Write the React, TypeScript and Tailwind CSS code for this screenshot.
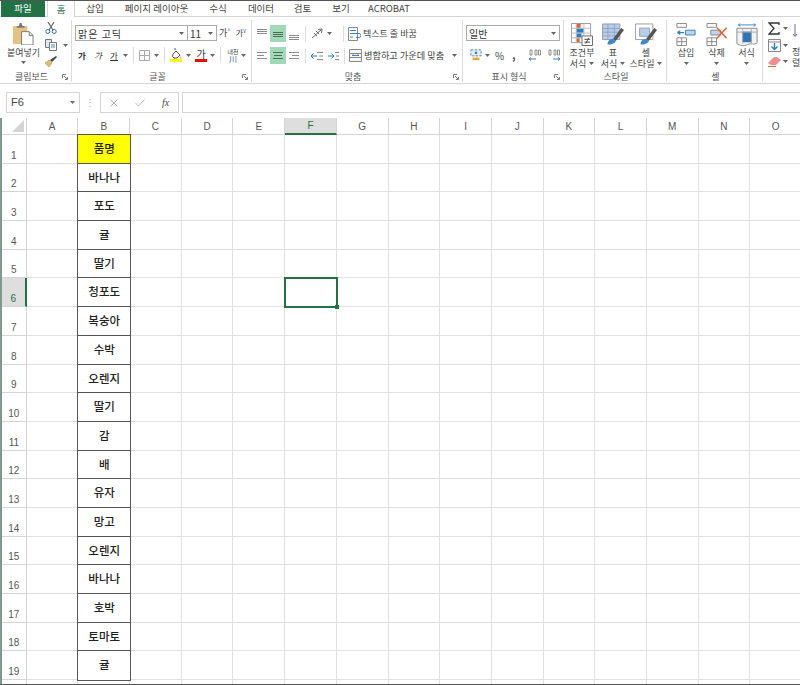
import type { ReactNode } from "react"

const columns = ["A", "B", "C", "D", "E", "F", "G", "H", "I", "J", "K", "L", "M", "N", "O"]

// Column B contents, row by row
const fruits = ["품명", "바나나", "포도", "귤", "딸기", "청포도", "복숭아", "수박", "오렌지", "딸기", "감", "배", "유자", "망고", "오렌지", "바나나", "호박", "토마토", "귤"]

const tabs = [
  { label: "삽입", width: "w-[40px]" },
  { label: "페이지 레이아웃", width: "w-[83px]" },
  { label: "수식", width: "w-[40px]" },
  { label: "데이터", width: "w-[46px]" },
  { label: "검토", width: "w-[37px]" },
  { label: "보기", width: "w-[40px]" },
  { label: "ACROBAT", width: "w-[56px]" },
]

function Caret() {
  return (
    <svg className="h-[3px] w-[5px] shrink-0" viewBox="0 0 5 3">
      <path d="M0 0h5L2.5 3z" fill="#666" />
    </svg>
  )
}

function Launcher() {
  return (
    <svg className="h-[6px] w-[6px] justify-self-end" viewBox="0 0 6 6">
      <path d="M.5 4V.5H4M2 2l3 3M5.500 3v2.500H3" fill="none" stroke="#777" strokeWidth="1" />
    </svg>
  )
}

function Group({ width, label, launcher, children }: { width: string; label: string; launcher?: boolean; children: ReactNode }) {
  return (
    <section className={`flex h-[62px] shrink-0 flex-col border-r border-[#dcdcdc] ${launcher ? "pr-[3px]" : "pl-[2px]"} ${width}`}>
      <div className="h-[52px]">{children}</div>
      <div className="grid h-[10px] grid-cols-[1fr_auto_1fr] items-center">
        <span />
        <span className={`text-[9px] leading-[10px] text-[#555] ${launcher ? "-ml-[5px]" : ""}`}>{label}</span>
        {launcher ? <Launcher /> : <span />}
      </div>
    </section>
  )
}

function Lines({ rows, active }: { rows: number[][]; active?: boolean }) {
  return (
    <span className={`flex h-[17px] w-[16px] shrink-0 items-center justify-center ${active ? "bg-[#a0d8b8]" : ""}`}>
      <svg className="h-[12px] w-[12px]" viewBox="0 0 12 12">
        {rows.map(([x1, x2, y]) => (
          <path key={y} d={`M${x1} ${y + 0.5}H${x2}`} stroke={active ? "#4d6b5c" : "#8a8a8a"} strokeWidth="1" />
        ))}
      </svg>
    </span>
  )
}

function Sep() {
  return <span className="mx-[5px] h-[16px] w-px shrink-0 bg-[#dcdcdc]" />
}

function PasteIcon() {
  return (
    <svg className="h-[22px] w-[21px]" viewBox="0 0 22 23">
      <rect x="0" y="3" width="15" height="19" rx="1" fill="#e7c27f" />
      <path d="M4 3h2l1-3h2l1 3h2v2H4z" fill="#7b7b7b" />
      <path d="M9 9h8l4 4v10H9z" fill="#fff" stroke="#777" />
      <path d="M17 9v4h4" fill="none" stroke="#777" />
    </svg>
  )
}

function ScissorsIcon() {
  return (
    <svg className="h-[13px] w-[12px]" viewBox="0 0 12 13">
      <path d="M3 1l5 8M9 1L4 9" stroke="#666" strokeWidth="1.200" />
      <circle cx="2.800" cy="10.500" r="2" fill="none" stroke="#2a6fb5" />
      <circle cx="9.200" cy="10.500" r="2" fill="none" stroke="#2a6fb5" />
    </svg>
  )
}

function CopyIcon() {
  return (
    <svg className="h-[12px] w-[12px]" viewBox="0 0 12 12">
      <path d="M.5.500h6v8h-6z" fill="#dfe7f0" stroke="#777" />
      <path d="M4.500 3.500h7v8h-7z" fill="#fff" stroke="#777" />
      <path d="M6 6h4M6 8h4" stroke="#4a86c5" />
    </svg>
  )
}

function BrushIcon() {
  return (
    <svg className="h-[11px] w-[12px]" viewBox="0 0 12 11">
      <path d="M0 7l4-3 3 3-3 4z" fill="#e6bd72" stroke="#a98642" strokeWidth=".5" />
      <path d="M5 4l6-4 1 1-5 5z" fill="#444" />
    </svg>
  )
}

function BorderIcon() {
  return (
    <svg className="h-[11px] w-[11px] shrink-0" viewBox="0 0 11 11">
      <path d="M.5.500h10v10H.500zM5.500.500v10M.5 5.500h10" fill="none" stroke="#aaa" />
    </svg>
  )
}

function FillIcon() {
  return (
    <svg className="h-[14px] w-[12px] shrink-0" viewBox="0 0 12 14">
      <path d="M3 6l3-3 4 4-3 3H4L2.500 8.500z" fill="#fff" stroke="#555" />
      <path d="M5 2V0" stroke="#555" />
      <path d="M10 8l1.500 2.500h-2z" fill="#e8a33d" />
      <rect x="0" y="11" width="12" height="3" fill="#ffff00" />
    </svg>
  )
}

function WrapCellIcon() {
  return (
    <svg className="h-[14px] w-[13px] shrink-0" viewBox="0 0 13 14">
      <path d="M.5.500h9v13h-9z" fill="#fff" stroke="#888" />
      <path d="M2 3.500h6M2 6.500h9a1.500 1.500 0 010 4H8M2 10h3" fill="none" stroke="#3f7fbf" />
    </svg>
  )
}

function MergeIcon() {
  return (
    <svg className="h-[13px] w-[13px] shrink-0" viewBox="0 0 13 13">
      <path d="M.5.500h12v12H.500z" fill="#f5f5f5" stroke="#888" />
      <path d="M.5 4.500h12M.5 8.500h12" stroke="#888" />
      <path d="M3 6.500h7M3 6.500l1.500-1M10 6.500l-1.500-1" fill="none" stroke="#3f7fbf" />
    </svg>
  )
}

function AccountingIcon() {
  return (
    <svg className="h-[14px] w-[12px] shrink-0" viewBox="0 0 14 14">
      <path d="M1 1h12v7H1z" fill="#e6eef7" stroke="#3f7fbf" strokeDasharray="3 1.500" />
      <circle cx="7" cy="4.500" r="1.500" fill="#3f7fbf" />
      <path d="M3 10h8v3H3z" fill="#e8a33d" />
    </svg>
  )
}

function DecimalIcon({ more }: { more?: boolean }) {
  return (
    <svg className="h-[12px] w-[14px] shrink-0" viewBox="0 0 14 12">
      <path d={more ? "M1 10h7M1 10l2-1.500M1 10l2 1.500" : "M13 10H6M13 10l-2-1.500M13 10l-2 1.500"} fill="none" stroke="#3f7fbf" />
      <path d="M2 1h2v5H2zM7 1h2v5H7zM10.500 1h2v5h-2z" fill="none" stroke="#777" strokeWidth=".8" />
    </svg>
  )
}

function CondFormatIcon() {
  return (
    <svg className="h-[23px] w-[22px]" viewBox="0 0 23 24">
      <path d="M.5.500h20v20H.500z" fill="#fff" stroke="#999" />
      <path d="M.5 5.500h20M.5 10.500h20M.5 15.500h20M5.500.500v20M13.500.500v20" stroke="#bbb" />
      <path d="M6 1h4v4H6z" fill="#e2622d" />
      <path d="M6 6h7v4H6z" fill="#2d7dc4" />
      <path d="M6 11h5v4H6z" fill="#2d7dc4" />
      <path d="M6 16h3v4H6z" fill="#e2622d" />
      <path d="M11.500 13.500h11v10h-11z" fill="#fff" stroke="#666" />
      <path d="M14 17h6M14 20h6M18.500 15.500l-3 6" stroke="#444" />
    </svg>
  )
}

function TableIcon() {
  return (
    <svg className="h-[23px] w-[22px]" viewBox="0 0 24 24">
      <path d="M.5.500h19v17H.500z" fill="#b9cde8" stroke="#999" />
      <path d="M.5 5.500h19M.5 9.500h19M.5 13.500h19M6.500.500v17M13.500.500v17" stroke="#8aa3c6" />
      <path d="M12 17l9-12 3 2-9 12z" fill="#555" />
      <path d="M6 23c0-4 3-6 6-6l3 2c-1 3-5 4-9 4z" fill="#3f86cc" />
    </svg>
  )
}

function CellStyleIcon() {
  return (
    <svg className="h-[23px] w-[22px]" viewBox="0 0 24 24">
      <path d="M.5.500h19v17H.500z" fill="#fff" stroke="#999" />
      <path d="M5 5h11v9H5z" fill="#b9cde8" stroke="#8aa3c6" />
      <path d="M12 17l9-12 3 2-9 12z" fill="#555" />
      <path d="M6 23c0-4 3-6 6-6l3 2c-1 3-5 4-9 4z" fill="#3f86cc" />
    </svg>
  )
}

function InsertIcon() {
  return (
    <svg className="h-[23px] w-[20px]" viewBox="0 0 20 24">
      <path d="M.5.500h10v4H.500zM.5 15.500h10v8H.500zM5.500 15.500v8M.5 19.500h10" fill="#fff" stroke="#888" />
      <path d="M9.500 7.500h10v5h-10z" fill="#bcd4ee" stroke="#3f7fbf" />
      <path d="M8 10H1M1 10l3-2M1 10l3 2" fill="none" stroke="#2d7dc4" strokeWidth="1.200" />
    </svg>
  )
}

function DeleteIcon() {
  return (
    <svg className="h-[23px] w-[22px]" viewBox="0 0 22 24">
      <path d="M.5.500h10v4H.500zM.5 15.500h10v8H.500zM5.500 15.500v8M.5 19.500h10" fill="#fff" stroke="#888" />
      <path d="M4.500 7.500h10v5h-10z" fill="#bcd4ee" stroke="#888" />
      <path d="M11 5l10 11M21 5L11 16" stroke="#e2622d" strokeWidth="1.600" />
    </svg>
  )
}

function FormatIcon() {
  return (
    <svg className="h-[24px] w-[22px]" viewBox="0 0 22 25">
      <path d="M2 2h18M2 2l2-1.500M2 2l2 1.500M20 2l-2-1.500M20 2l-2 1.500" fill="none" stroke="#3f86cc" />
      <path d="M.5 5.500h21v15c-3 3-6 0-10 2s-8 1-11-1z" fill="#f2f2f2" stroke="#888" />
      <path d="M6 9h10v11H6z" fill="#2d74b8" />
      <path d="M.5 9.500h21M6.500 5.500v16M15.500 5.500v16" stroke="#aaa" fill="none" />
    </svg>
  )
}

function SumIcon() {
  return (
    <svg className="h-[13px] w-[12px]" viewBox="0 0 12 13">
      <path d="M11 3V1H1l5 5.500L1 12h10v-2" fill="none" stroke="#333" strokeWidth="1.300" />
    </svg>
  )
}

function FillDownIcon() {
  return (
    <svg className="h-[13px] w-[13px]" viewBox="0 0 13 13">
      <path d="M.5.500h12v12H.500z" fill="#fff" stroke="#888" />
      <path d="M.5 3h12" stroke="#888" />
      <path d="M6.500 4v6M3.500 7.500l3 3 3-3" fill="none" stroke="#2d7dc4" strokeWidth="1.400" />
    </svg>
  )
}

function EraserIcon() {
  return (
    <svg className="h-[11px] w-[13px]" viewBox="0 0 13 11">
      <path d="M0 7l6-6h3l4 3-5 5H3z" fill="#ef8d92" />
      <path d="M0 10.500h8" stroke="#e2622d" />
    </svg>
  )
}

function BigButton({ icon, lines, width, arrowLine }: { icon: ReactNode; lines: string[]; width: string; arrowLine?: boolean }) {
  return (
    <div className={`flex shrink-0 flex-col items-center pt-[3px] ${width}`}>
      <div className="flex h-[24px] items-start justify-center">{icon}</div>
      <div className="flex flex-col items-center text-[9px] leading-[11px] text-[#444]">
        {lines.map((line, i) => (
          <span key={line} className="flex h-[11px] items-center gap-[3px] whitespace-nowrap">
            {line}
            {i === lines.length - 1 && !arrowLine && <Caret />}
          </span>
        ))}
        {arrowLine && (
          <span className="flex h-[11px] items-center">
            <Caret />
          </span>
        )}
      </div>
    </div>
  )
}

function Ribbon() {
  return (
    <div className="flex h-[67px] shrink-0 border-b border-[#d4d4d4] bg-white pt-[3px] font-[Noto_Sans_CJK_KR,sans-serif]">
      <Group width="w-[72px]" label="클립보드" launcher>
        <div className="flex">
          <div className="ml-[4px] flex w-[40px] flex-col items-center pt-[3px]">
            <PasteIcon />
            <span className="mt-[2px] whitespace-nowrap text-[9px] leading-[11px] text-[#444]">붙여넣기</span>
            <span className="mt-[3px]">
              <Caret />
            </span>
          </div>
          <div className="ml-[2px] flex flex-col gap-[5px] pt-[1px]">
            <ScissorsIcon />
            <span className="flex items-center gap-[6px]">
              <CopyIcon />
              <Caret />
            </span>
            <BrushIcon />
          </div>
        </div>
      </Group>

      <Group width="w-[180px]" label="글꼴" launcher>
        <div className="flex flex-col gap-[6px] pt-[5px]">
          <div className="flex items-center pl-[3px]">
            <div className="flex h-[16px] w-[113px] items-center justify-between border border-[#ababab] pl-[2px] pr-[3px] text-[10px] tracking-[1px] text-[#333]">
              맑은 고딕
              <Caret />
            </div>
            <div className="flex h-[16px] w-[29px] items-center justify-between border border-l-0 border-[#ababab] pl-[2px] pr-[3px] text-[10px] text-[#333]">
              11
              <Caret />
            </div>
            <span className="ml-[2px] text-[9px] text-[#444]">가<sup className="text-[6px] text-[#2d7dc4]">^</sup></span>
            <span className="ml-[5px] text-[8px] text-[#444]">가<sup className="text-[6px] text-[#2d7dc4]">v</sup></span>
          </div>
          <div className="flex h-[16px] items-center pl-[2px] text-[8.500px] leading-none text-[#333]">
            <span className="w-[16px] text-center font-bold">가</span>
            <span className="w-[16px] text-center italic">가</span>
            <span className="w-[16px] text-center underline">가</span>
            <span className="ml-[1px]">
              <Caret />
            </span>
            <Sep />
            <BorderIcon />
            <span className="ml-[4px]">
              <Caret />
            </span>
            <Sep />
            <FillIcon />
            <span className="ml-[4px]">
              <Caret />
            </span>
            <span className="ml-[4px] flex w-[12px] flex-col items-center border-b-[3px] border-[#ff0000] text-[10px] leading-[11px]">가</span>
            <span className="ml-[3px]">
              <Caret />
            </span>
            <Sep />
            <span className="flex w-[14px] flex-col items-center">
              <span className="text-[6px] leading-[7px] text-[#444]">내천</span>
              <span className="text-[8px] leading-[8px] text-[#2d5f93]">川</span>
            </span>
            <span className="ml-[1px]">
              <Caret />
            </span>
          </div>
        </div>
      </Group>

      <Group width="w-[211px]" label="맞춤" launcher>
        <div className="flex flex-col gap-[5px] pt-[5px]">
          <div className="flex h-[17px] items-center pl-[2px] text-[9px] text-[#444]">
            <Lines rows={[[1, 11, 1], [1, 11, 3], [1, 11, 5]]} />
            <Lines active rows={[[1, 11, 4], [1, 11, 6], [1, 11, 8]]} />
            <Lines rows={[[1, 11, 7], [1, 11, 9], [1, 11, 11]]} />
            <span className="ml-[3px] mr-[5px] h-[16px] w-px shrink-0 bg-[#dcdcdc]" />
            <svg className="h-[12px] w-[14px] shrink-0" viewBox="0 0 14 12">
              <path d="M1 10L10 2M7 1.500L11 1l-.5 4M3 5l3 3M5 3l3 3" fill="none" stroke="#666" />
            </svg>
            <span className="ml-[2px]">
              <Caret />
            </span>
            <span className="ml-[11px] mr-[4px] h-[16px] w-px shrink-0 bg-[#dcdcdc]" />
            <span className="flex items-center gap-[2px] whitespace-nowrap">
              <WrapCellIcon />
              텍스트 줄 바꿈
            </span>
          </div>
          <div className="flex h-[17px] items-center pl-[2px] text-[9.200px] text-[#444]">
            <Lines rows={[[1, 11, 2], [1, 8, 5], [1, 11, 8]]} />
            <Lines active rows={[[1, 11, 2], [2, 10, 5], [1, 11, 8]]} />
            <Lines rows={[[1, 11, 2], [4, 11, 5], [1, 11, 8]]} />
            <span className="ml-[3px] mr-[5px] h-[16px] w-px shrink-0 bg-[#dcdcdc]" />
            <svg className="h-[10px] w-[28px] shrink-0" viewBox="0 0 28 10">
              <path d="M0 5h6M0 5l2.500-2.500M0 5l2.500 2.500M17 5h6M23 5l-2.500-2.500M23 5l-2.500 2.500" fill="none" stroke="#2d7dc4" />
              <path d="M6 1.500h6M8 5h4M6 8.500h6M24 1.500h4M25 5h3M24 8.500h4" stroke="#888" />
            </svg>
            <span className="ml-[5px] mr-[4px] h-[16px] w-px shrink-0 bg-[#dcdcdc]" />
            <span className="flex items-center gap-[2px] whitespace-nowrap">
              <MergeIcon />
              병합하고 가운데 맞춤
            </span>
            <span className="ml-[8px]">
              <Caret />
            </span>
          </div>
        </div>
      </Group>

      <Group width="w-[101px]" label="표시 형식" launcher>
        <div className="flex flex-col gap-[6px] pl-[3px] pt-[5px]">
          <div className="flex h-[16px] w-[94px] items-center justify-between border border-[#ababab] pl-[2px] pr-[3px] text-[10px] text-[#333]">
            일반
            <Caret />
          </div>
          <div className="flex h-[16px] items-center pl-[4px] text-[#444]">
            <AccountingIcon />
            <span className="ml-[3px]">
              <Caret />
            </span>
            <span className="ml-[5px] text-[10px]">%</span>
            <span className="ml-[8px] text-[10px] font-bold leading-[10px]">,</span>
            <span className="ml-[3px]">
              <Sep />
            </span>
            <DecimalIcon more />
            <span className="ml-[5px]">
              <DecimalIcon />
            </span>
          </div>
        </div>
      </Group>

      <Group width="w-[103px]" label="스타일">
        <div className="-ml-[2px] flex">
          <BigButton icon={<CondFormatIcon />} lines={["조건부", "서식"]} width="w-[36px]" />
          <BigButton icon={<TableIcon />} lines={["표", "서식"]} width="w-[26px]" />
          <BigButton icon={<CellStyleIcon />} lines={["셀", "스타일"]} width="w-[40px]" />
        </div>
      </Group>

      <Group width="w-[96px]" label="셀">
        <div className="flex pl-[2px]">
          <BigButton icon={<InsertIcon />} lines={["삽입"]} width="w-[30px]" arrowLine />
          <BigButton icon={<DeleteIcon />} lines={["삭제"]} width="w-[31px]" arrowLine />
          <BigButton icon={<FormatIcon />} lines={["서식"]} width="w-[29px]" arrowLine />
        </div>
      </Group>

      <div className="flex pl-[5px] pt-[2px]">
        <div className="flex w-[24px] flex-col gap-[4px]">
          <span className="flex items-center gap-[3px]">
            <SumIcon />
            <Caret />
          </span>
          <span className="flex items-center gap-[2px]">
            <FillDownIcon />
            <Caret />
          </span>
          <span className="flex items-center gap-[2px]">
            <EraserIcon />
            <Caret />
          </span>
        </div>
        <div className="flex flex-col items-start pt-[2px] text-[9px] leading-[11px] text-[#444]">
          <svg className="mb-[9px] h-[13px] w-[6px]" viewBox="0 0 6 13">
            <path d="M3 0v12M1 10l2 2.500L5 10" fill="none" stroke="#7c5fb0" />
          </svg>
          <span>정</span>
          <span>렬</span>
        </div>
      </div>
    </div>
  )
}

function FormulaBar() {
  return (
    <div className="flex h-[34px] shrink-0 items-start bg-white pl-[6px] pt-[8px] font-[Liberation_Sans,sans-serif] text-[#444]">
      <div className="flex h-[21px] w-[74px] items-center justify-between border border-[#d4d4d4] pl-[4px] pr-[4px] text-[11px]">
        F6
        <Caret />
      </div>
      <div className="flex h-[21px] w-[20px] items-center justify-center text-[10px] tracking-tighter text-[#aaa]">⋮</div>
      <div className="flex h-[21px] w-[79px] items-center border border-[#d4d4d4] pl-[9px] text-[#aaa]">
        <svg className="h-[8px] w-[8px]" viewBox="0 0 8 8">
          <path d="M.5.500l7 7M7.500.500l-7 7" stroke="#b5b5b5" />
        </svg>
        <svg className="ml-[17px] h-[8px] w-[10px]" viewBox="0 0 10 8">
          <path d="M.5 4l3 3 6-6.500" fill="none" stroke="#b5b5b5" />
        </svg>
        <span className="ml-[17px] font-[Liberation_Serif,serif] text-[10px] italic text-[#444]">fx</span>
      </div>
      <div className="ml-[3px] h-[21px] flex-1 border border-r-0 border-[#d4d4d4]" />
    </div>
  )
}

function Sheet() {
  return (
    <div className="grid flex-1 grid-cols-[24.700px_repeat(15,51.700px)] grid-rows-[17px_repeat(20,28.700px)] overflow-hidden border-l-2 border-[#7d9a8a] font-[Noto_Sans_CJK_KR,sans-serif] text-[#444]">
      <div className="flex items-end justify-end border-b border-r border-[#d4d4d4] bg-white pb-[2px] pr-[2px]">
        <svg className="h-[12px] w-[12px]" viewBox="0 0 12 12">
          <path d="M12 0v12H0z" fill="#d4d4d4" />
        </svg>
      </div>
      {columns.map((col) => (
        <div
          key={col}
          className={
            col === "F"
              ? "flex items-center justify-center border-b-2 border-r border-b-[#217346] border-r-[#d4d4d4] bg-[#dedede] font-[Liberation_Sans,sans-serif] text-[10px] text-[#217346]"
              : "flex items-center justify-center border-b border-r border-[#d4d4d4] bg-white font-[Liberation_Sans,sans-serif] text-[10px] text-[#555]"
          }
        >
          {col}
        </div>
      ))}
      {Array.from({ length: 20 }, (_, r) => (
        <Row key={r} index={r} />
      ))}
    </div>
  )
}

function Row({ index }: { index: number }) {
  const rowNum = index + 1
  return (
    <>
      <div
        className={
          rowNum === 6
            ? "flex items-end justify-center border-b border-r-2 border-b-[#d4d4d4] border-r-[#217346] bg-[#dedede] font-[Liberation_Sans,sans-serif] text-[10px] text-[#217346]"
            : "flex items-end justify-center border-b border-r border-[#d4d4d4] bg-white font-[Liberation_Sans,sans-serif] text-[10px] text-[#555]"
        }
      >
        {rowNum < 20 ? rowNum : null}
      </div>
      {columns.map((col) => {
        if (col === "B" && fruits[index]) {
          return (
            <div
              key={col}
              className={`relative z-10 flex items-start justify-center pt-[5px] text-[11.500px] font-medium leading-[16px] text-[#222] outline outline-1 outline-[#555] ${index === 0 ? "bg-[#ffff00]" : "bg-white"}`}
            >
              {fruits[index]}
            </div>
          )
        }
        if (col === "F" && rowNum === 6) {
          return (
            <div key={col} className="relative z-10 bg-white outline outline-2 -outline-offset-1 outline-[#217346]">
              <span className="absolute -bottom-[2px] -right-[2px] h-[4px] w-[4px] bg-[#217346]" />
            </div>
          )
        }
        return <div key={col} className="border-b border-r border-[#e0e0e0] bg-white" />
      })}
    </>
  )
}

export default function App() {
  return (
    <div className="flex h-[685px] w-[800px] flex-col overflow-hidden border-b border-t border-[#555] bg-white">
      <div className="flex h-[16px] shrink-0 items-center border-b border-[#d4d4d4] font-[Noto_Sans_CJK_KR,sans-serif] text-[9.500px] text-[#444]">
        <div className="ml-[1px] flex h-[16px] w-[44px] items-center justify-center bg-[#217346] text-white">파일</div>
        <div className="ml-[2px] flex h-[17px] w-[28px] items-center justify-center border-x border-t border-[#d4d4d4] bg-white text-[#217346]">홈</div>
        {tabs.map((tab) => (
          <div key={tab.label} className={`flex shrink-0 items-center justify-center whitespace-nowrap ${tab.width}`}>
            {tab.label}
          </div>
        ))}
      </div>
      <Ribbon />
      <FormulaBar />
      <Sheet />
    </div>
  )
}
